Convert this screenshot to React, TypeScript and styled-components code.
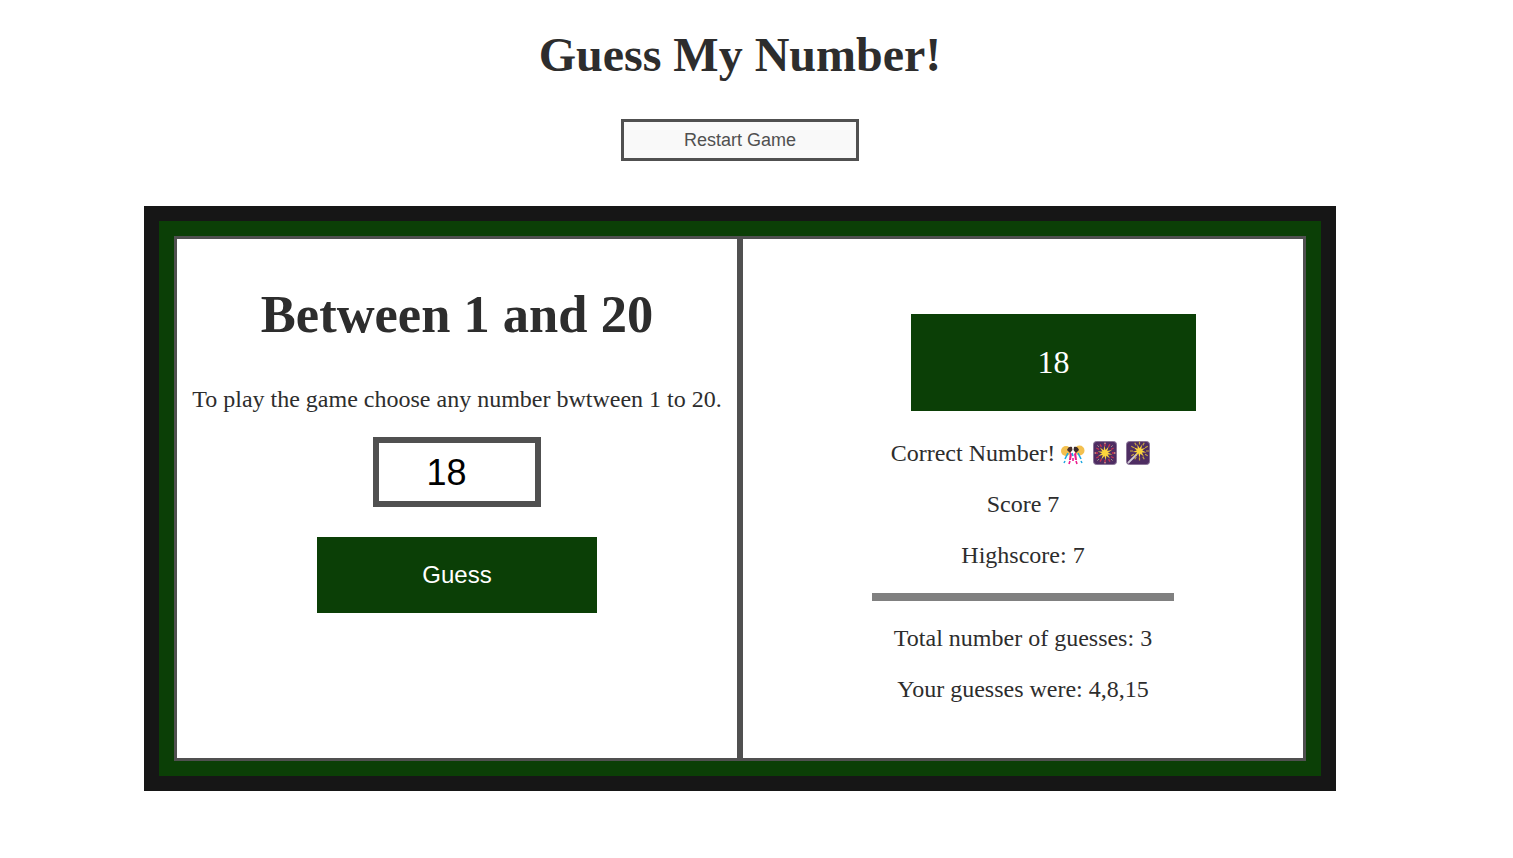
import React from 'react';
import styled, { createGlobalStyle } from 'styled-components';

const GlobalStyle = createGlobalStyle`
  html, body {
    margin: 0;
    padding: 0;
    background: #fff;
  }
  body {
    font-family: "Liberation Serif", "Times New Roman", serif;
    color: #2d2d2d;
  }
`;

const Page = styled.div`
  width: 1480px;
  display: flex;
  flex-direction: column;
  align-items: center;
  padding-top: 28px;
`;

const Title = styled.h1`
  margin: 0 0 37px;
  font-size: 48px;
  line-height: 54px;
  font-weight: 700;
`;

const RestartButton = styled.button`
  width: 238px;
  height: 42px;
  margin-bottom: 45px;
  border: 3px solid #505050;
  background: #f9f9f9;
  color: #505050;
  font-family: "Liberation Sans", Arial, sans-serif;
  font-size: 18px;
  cursor: pointer;
`;

const GameFrame = styled.div`
  box-sizing: border-box;
  width: 1192px;
  height: 585px;
  padding: 15px;
  background: #161616;
`;

const GreenBand = styled.div`
  box-sizing: border-box;
  height: 100%;
  padding: 15px;
  background: #0b3f06;
`;

const Board = styled.div`
  box-sizing: border-box;
  height: 100%;
  display: grid;
  grid-template-columns: 1fr 1fr;
  background: #fff;
  border: 3px solid #505050;
`;

const LeftPanel = styled.section`
  display: flex;
  flex-direction: column;
  align-items: center;
  padding-top: 46px;
  border-right: 3px solid #505050;
`;

const RightPanel = styled.section`
  display: flex;
  flex-direction: column;
  align-items: center;
  padding-top: 75px;
  border-left: 3px solid #505050;
`;

const Heading = styled.h2`
  margin: 0 0 43px;
  font-size: 52.5px;
  line-height: 58px;
  font-weight: 700;
`;

const Body = styled.p`
  margin: 0 0 24px;
  font-size: 24px;
  line-height: 27px;
`;

const GuessInput = styled.input`
  box-sizing: border-box;
  width: 168px;
  height: 70px;
  margin-bottom: 30px;
  padding: 2px 7px 0 1px;
  border: 6px solid #505050;
  background: #fff;
  color: #000;
  font-family: "Liberation Sans", Arial, sans-serif;
  font-size: 36px;
  text-align: center;
  outline: none;
`;

const GuessButton = styled.button`
  width: 280px;
  height: 76px;
  border: 0;
  background: #0b3f06;
  color: #fff;
  font-family: "Liberation Sans", Arial, sans-serif;
  font-size: 24px;
  cursor: pointer;
`;

const Answer = styled.div`
  width: 285px;
  height: 97px;
  margin: 0 0 29px 61px;
  display: flex;
  align-items: center;
  justify-content: center;
  background: #0b3f06;
  color: #fff;
  font-size: 32px;
`;

const Divider = styled.hr`
  width: 302px;
  height: 8px;
  margin: 0 0 24px;
  border: 0;
  background: #808080;
`;

const ResultRow = styled(Body)`
  display: flex;
  align-items: flex-end;
  height: 27px;
  padding-right: 5px;
`;

const ResultText = styled.span`
  margin-right: 6px;
`;

const Emoji = styled.svg<{ $gap?: number }>`
  flex: none;
  width: 24px;
  height: 24px;
  margin-left: ${p => p.$gap ?? 0}px;
  margin-bottom: 2px;
`;

// spoke lines around a centre, used for both firework icons
const rays = (cx: number, cy: number, inner: number, outer: number, count: number) =>
  Array.from({ length: count }, (_, i) => {
    const a = (i / count) * Math.PI * 2;
    return `M${cx + Math.cos(a) * inner} ${cy + Math.sin(a) * inner}L${cx + Math.cos(a) * outer} ${cy + Math.sin(a) * outer}`;
  }).join('');

const starPoints = (cx: number, cy: number, r1: number, r2: number, count: number) =>
  Array.from({ length: count * 2 }, (_, i) => {
    const a = (i / (count * 2)) * Math.PI * 2 + 0.2;
    const r = i % 2 ? r2 : r1;
    return `${cx + Math.cos(a) * r},${cy + Math.sin(a) * r}`;
  }).join(' ');

const DancersIcon = () => (
  <Emoji viewBox="0 0 24 24">
    <circle cx="5" cy="10" r="5" fill="#f3c04f" />
    <circle cx="18.5" cy="9.5" r="5" fill="#f3c04f" />
    <path d="M6 9c1-3 3-4 5-3l.5 3-2.5 3z" fill="#4a2f2a" />
    <path d="M18 9c-1-3-3-4-5-3l-.5 3 2.500 3z" fill="#3a2a2a" />
    <path d="M9 11l2 2-1 6h-2z" fill="#ec1c8e" />
    <path d="M15 11l-2 2 1 6h2z" fill="#ec1c8e" />
    <path d="M7 12l-2 4-1 2M11 12l1 3M17 12l2 4 1 2" stroke="#1ba7e0" strokeWidth="1.600" fill="none" />
    <path d="M9 20l-1 3M15 20l1 3M12 17v3" stroke="#ec1c8e" strokeWidth="1.600" fill="none" />
    <path d="M4 20l-1 2M20 20l1 2" stroke="#1ba7e0" strokeWidth="1.500" fill="none" />
  </Emoji>
);

const FireworksIcon = () => (
  <Emoji $gap={8} viewBox="0 0 24 24">
    <rect x="0.5" y="0.5" width="23" height="23" rx="3" fill="#4e2d62" stroke="#8b7698" />
    <path d={rays(12, 12, 7, 10, 12)} stroke="#c8324f" strokeWidth="1.300" />
    <path d={rays(12, 12, 9, 10.500, 8)} stroke="#d8c8a0" strokeWidth="1" />
    <polygon points={starPoints(12, 12, 7.500, 3, 10)} fill="#fbd43c" />
  </Emoji>
);

const SparklerIcon = () => (
  <Emoji $gap={9} viewBox="0 0 24 24">
    <rect x="0.5" y="0.5" width="23" height="23" rx="3" fill="#4e2d62" stroke="#8b7698" />
    <path d="M2 22l9-9" stroke="#cfc8d6" strokeWidth="1.800" />
    <path d={rays(13.500, 10, 6.500, 9.500, 12)} stroke="#c9a53e" strokeWidth="1.200" />
    <polygon points={starPoints(13.500, 10, 7, 2.800, 9)} fill="#fbd43c" />
  </Emoji>
);

const App: React.FC = () => (
  <Page>
    <GlobalStyle />
    <Title>Guess My Number!</Title>
    <RestartButton>Restart Game</RestartButton>
    <GameFrame>
      <GreenBand>
        <Board>
          <LeftPanel>
            <Heading>Between 1 and 20</Heading>
            <Body>To play the game choose any number bwtween 1 to 20.</Body>
            <GuessInput type="number" defaultValue={18} />
            <GuessButton>Guess</GuessButton>
          </LeftPanel>
          <RightPanel>
            <Answer>18</Answer>
            <ResultRow>
              <ResultText>Correct Number!</ResultText>
              <DancersIcon />
              <FireworksIcon />
              <SparklerIcon />
            </ResultRow>
            <Body>Score 7</Body>
            <Body>Highscore: 7</Body>
            <Divider />
            <Body>Total number of guesses: 3</Body>
            <Body>Your guesses were: 4,8,15</Body>
          </RightPanel>
        </Board>
      </GreenBand>
    </GameFrame>
  </Page>
);

export default App;
